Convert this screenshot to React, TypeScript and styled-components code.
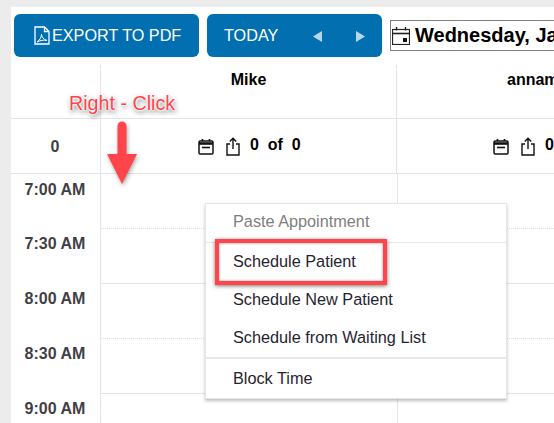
import styled, { createGlobalStyle } from "styled-components";

const Global = createGlobalStyle`
  html, body {
    margin: 0;
    padding: 0;
    height: 100%;
    overflow: hidden;
    background: #ececec;
  }
  * { box-sizing: border-box; }
`;

const Page = styled.div`
  position: relative;
  width: 554px;
  height: 423px;
  padding: 7px 0 0 11px;
  overflow: hidden;
  font-family: "Liberation Sans", Arial, sans-serif;
`;

const Sheet = styled.div`
  background: #fff;
  height: 416px;
  width: 543px;
  overflow: hidden;
`;

const Toolbar = styled.div`
  display: flex;
  align-items: flex-start;
  padding: 7px 0 0 3px;
  gap: 8px;
  height: 58px;
  white-space: nowrap;
`;

const BlueButton = styled.div<{ $w: number }>`
  display: flex;
  align-items: center;
  width: ${(p) => p.$w}px;
  height: 43px;
  background: #0270b0;
  border-radius: 6px;
  color: #fff;
  font-size: 16.2px;
  flex: none;
`;

const ExportButton = styled(BlueButton)`
  padding-left: 20px;
  gap: 2px;
`;

const TodayButton = styled(BlueButton)`
  padding-left: 17px;
`;

const Arrows = styled.div`
  display: flex;
  gap: 34px;
  margin: 2px 0 0 35px;
`;

const DateBox = styled.div`
  display: flex;
  align-items: center;
  flex: none;
  width: 164px;
  height: 31px;
  border: 1px solid #808080;
  border-right: none;
  font-size: 20px;
  font-weight: 700;
  color: #000;
  gap: 5px;
  margin-top: 6px;
  padding-left: 1px;
  svg {
    flex: none;
  }
`;

const HeaderRow = styled.div`
  display: grid;
  grid-template-columns: 90px 296px 1fr;
  height: 54px;
  border-bottom: 1px solid #e4e4e4;
`;

const SummaryRow = styled.div`
  display: grid;
  grid-template-columns: 90px 296px 1fr;
  height: 55px;
  border-bottom: 1px solid #e4e4e4;
`;

const SideCell = styled.div`
  border-right: 1px solid #e4e4e4;
  display: flex;
  align-items: center;
  justify-content: center;
  font-size: 16px;
  font-weight: 700;
  color: #3f3f46;
  padding: 1px 1px 0 0;
`;

const NameCell = styled.div`
  border-right: 1px solid #e4e4e4;
  display: flex;
  justify-content: center;
  padding: 6px 0 0 0;
  font-size: 16px;
  font-weight: 700;
  color: #000;
  white-space: nowrap;
`;

const LastNameCell = styled(NameCell)`
  border-right: none;
  justify-content: flex-start;
  padding-left: 110px;
`;

const CountCell = styled.div`
  border-right: 1px solid #e4e4e4;
  display: flex;
  align-items: center;
  justify-content: flex-start;
  padding-left: 97px;
  gap: 12px;
  font-size: 16px;
  font-weight: 700;
  color: #000;
  white-space: pre;
  svg {
    flex: none;
  }
`;

const LastCountCell = styled(CountCell)`
  border-right: none;
  padding-left: 96px;
`;

const CountText = styled.span`
  margin: -2px 0 0 -2px;
`;

const SlotRow = styled.div<{ $half: boolean }>`
  display: grid;
  grid-template-columns: 90px 297px 1fr;
  height: 55px;
  border-bottom: 1px ${(p) => (p.$half ? "dotted #e0e0e0" : "solid #e4e4e4")};
`;

const TimeCell = styled.div<{ $top: number }>`
  background: #fff;
  border-right: 1px solid #e4e4e4;
  font-size: 16px;
  font-weight: 700;
  color: #3f3f46;
  text-align: center;
  padding: ${(p) => p.$top}px 1px 0 0;
  margin-bottom: -1px;
`;

const SlotCell = styled.div`
  border-right: 1px solid #e4e4e4;
  margin-bottom: -1px;
`;

const EmptySlot = styled.div``;

const Menu = styled.div`
  position: absolute;
  left: 205px;
  top: 203px;
  width: 302px;
  height: 196px;
  background: #fff;
  border: 1px solid #e6e6e6;
  box-shadow: 0 2px 3px rgba(0, 0, 0, 0.25);
  font-size: 16.25px;
  color: #1f2430;
`;

const MenuItem = styled.div<{ $muted?: boolean; $lift: number }>`
  height: 38px;
  display: flex;
  align-items: center;
  padding: 0 0 ${(p) => p.$lift}px 27px;
  color: ${(p) => (p.$muted ? "#808080" : "#1f2430")};
`;

const MenuRule = styled.div<{ $h: number }>`
  height: ${(p) => p.$h}px;
  background: #e8e8e8;
`;

const Highlight = styled.div`
  position: absolute;
  left: 215px;
  top: 239px;
  width: 172px;
  height: 46px;
  border: 4px solid #ff444b;
  box-shadow: 0 1px 4px rgba(0, 0, 0, 0.55), inset 0 0 3px rgba(0, 0, 0, 0.4);
`;

const Callout = styled.div`
  position: absolute;
  left: 69px;
  top: 92px;
  font-size: 19.7px;
  color: #ff444b;
  white-space: nowrap;
  text-shadow: 0 0 2px #fff, 0 0 2px #fff, 0 0 3px #fff, 0 0 3px #fff, 1px 2px 5px rgba(0, 0, 0, 0.75);
`;

const ArrowMark = styled.svg`
  position: absolute;
  left: 105px;
  top: 120px;
  filter: drop-shadow(1px 2px 2px rgba(0, 0, 0, 0.35));
`;

const PdfIcon = () => (
  <svg width="16" height="19" viewBox="0 0 16 19" fill="none" stroke="#fff" strokeWidth="1.3">
    <path d="M1 1h9.5L15 5.5V18H1z" />
    <path d="M10.5 1v4.5H15" />
    <path d="M3 16c3-2 4.500-5 4.500-8 0 3 2 5.500 5.500 6.500-3.500-.8-7 0-10 1.500z" strokeWidth="1" />
  </svg>
);

const LeftIcon = () => (
  <svg width="9" height="11" viewBox="0 0 9 11">
    <path d="M9 0v11L0 5.500z" fill="#b8d6ea" />
  </svg>
);

const RightIcon = () => (
  <svg width="9" height="11" viewBox="0 0 9 11">
    <path d="M0 0v11l9-5.500z" fill="#b8d6ea" />
  </svg>
);

const DateIcon = () => (
  <svg width="18" height="18" viewBox="0 0 18 18" fill="none" stroke="#222">
    <rect x="0.5" y="2.500" width="17" height="15" strokeWidth="1.2" />
    <path d="M0.500 6.500h17" strokeWidth="1.6" />
    <path d="M4.500 0v3.500M13.500 0v3.500" strokeWidth="1.4" />
    <rect x="11" y="11" width="4" height="4" fill="#111" stroke="none" />
  </svg>
);

const EventIcon = () => (
  <svg width="16" height="17" viewBox="0 0 16 17" fill="none" stroke="#111">
    <rect x="1" y="3" width="14" height="13" rx="1.2" strokeWidth="1.5" />
    <path d="M1 5.500h14" strokeWidth="2.600" />
    <path d="M4.500 1v2M11.500 1v2" strokeWidth="1.600" />
    <path d="M4 9.500h8" strokeWidth="1.600" />
  </svg>
);

const ShareIcon = () => (
  <svg width="14" height="19" viewBox="0 0 14 19" fill="none" stroke="#111" strokeWidth="1.4">
    <path d="M4 7H1v11h12V7h-3" />
    <path d="M7 12V1.500M3.800 4.500 7 1.300l3.200 3.200" />
  </svg>
);

const slots = [
  { time: "7:00 AM", half: true, top: 7 },
  { time: "7:30 AM", half: false, top: 6 },
  { time: "8:00 AM", half: true, top: 6 },
  { time: "8:30 AM", half: false, top: 6 },
  { time: "9:00 AM", half: true, top: 6 },
];

export default function App() {
  return (
    <Page>
      <Global />
      <Sheet>
        <Toolbar>
          <ExportButton $w={185}>
            <PdfIcon />
            EXPORT TO PDF
          </ExportButton>
          <TodayButton $w={175}>
            TODAY
            <Arrows>
              <LeftIcon />
              <RightIcon />
            </Arrows>
          </TodayButton>
          <DateBox>
            <DateIcon />
            Wednesday, Ja
          </DateBox>
        </Toolbar>
        <HeaderRow>
          <SideCell />
          <NameCell>Mike</NameCell>
          <LastNameCell>annam</LastNameCell>
        </HeaderRow>
        <SummaryRow>
          <SideCell>0</SideCell>
          <CountCell>
            <EventIcon />
            <ShareIcon />
            <CountText>0  of  0</CountText>
          </CountCell>
          <LastCountCell>
            <EventIcon />
            <ShareIcon />
            <CountText>0</CountText>
          </LastCountCell>
        </SummaryRow>
        {slots.map((s) => (
          <SlotRow key={s.time} $half={s.half}>
            <TimeCell $top={s.top}>{s.time}</TimeCell>
            <SlotCell />
            <EmptySlot />
          </SlotRow>
        ))}
      </Sheet>
      <Menu>
        <MenuItem $muted $lift={4}>Paste Appointment</MenuItem>
        <MenuRule $h={1} />
        <MenuItem $lift={2}>Schedule Patient</MenuItem>
        <MenuItem $lift={2}>Schedule New Patient</MenuItem>
        <MenuItem $lift={2}>Schedule from Waiting List</MenuItem>
        <MenuRule $h={2} />
        <MenuItem $lift={0}>Block Time</MenuItem>
      </Menu>
      <Highlight />
      <Callout>Right - Click</Callout>
      <ArrowMark width="34" height="66" viewBox="0 0 34 66">
        <path d="M17 6v30" stroke="#ff444b" strokeWidth="9" strokeLinecap="round" />
        <path d="M2 34h30L17 64z" fill="#ff444b" />
      </ArrowMark>
    </Page>
  );
}
